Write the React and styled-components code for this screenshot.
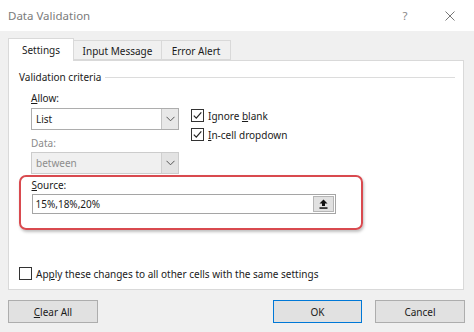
import React from "react";
import styled, { createGlobalStyle } from "styled-components";

const Global = createGlobalStyle`
  html, body { margin: 0; padding: 0; background: #f0f0f0; }
  * { box-sizing: border-box; }
`;

const Chevron = () => (
  <svg width="9" height="6" viewBox="0 0 9 6">
    <polyline points="0.5,0.8 4.5,4.8 8.5,0.8" fill="none" stroke="#555" strokeWidth="1" />
  </svg>
);

const Check = () => (
  <svg width="11" height="11" viewBox="0 0 11 11">
    <polyline points="1.8,5.6 4.3,8.2 9.3,2.4" fill="none" stroke="#222" strokeWidth="1.2" />
  </svg>
);

const UploadIcon = () => (
  <svg width="9" height="10" viewBox="0 0 9 10">
    <path d="M4.5 0.5 L8.5 4.5 H6 V7 H3 V4.5 H0.5 Z" fill="#111" />
    <rect x="0.5" y="8.3" width="8" height="1.5" fill="#111" />
  </svg>
);

const CloseIcon = () => (
  <svg width="10" height="10" viewBox="0 0 10 10">
    <path d="M0.5 0.5 L9.5 9.5 M9.5 0.5 L0.5 9.5" stroke="#777" strokeWidth="1" />
  </svg>
);

const Combo = ({ value, disabled }) => (
  <Select disabled={disabled}>
    <SelectValue disabled={disabled}>{value}</SelectValue>
    <SelectArrow disabled={disabled}>
      <Chevron />
    </SelectArrow>
  </Select>
);

const CheckRow = ({ checked, children }) => (
  <CheckLine>
    <Box>{checked && <Check />}</Box>
    <span>{children}</span>
  </CheckLine>
);

export default function App() {
  return (
    <Window>
      <Global />
      <TitleBar>
        <Title>Data Validation</Title>
        <TitleButtons>
          <Help>?</Help>
          <Close>
            <CloseIcon />
          </Close>
        </TitleButtons>
      </TitleBar>

      <Body>
        <Tabs>
          <Tab active w={66}>Settings</Tab>
          <Tab w={89}>Input Message</Tab>
          <Tab w={70}>Error Alert</Tab>
        </Tabs>

        <Panel>
          <Legend>
            <span>Validation criteria</span>
            <Rule />
          </Legend>

          <Criteria>
            <LeftCol>
              <Label>
                <u>A</u>llow:
              </Label>
              <Combo value="List" />
              <Label muted gap={6}>
                Data:
              </Label>
              <Combo value="between" disabled />
            </LeftCol>
            <RightCol>
              <CheckRow checked>
                Ignore <u>b</u>lank
              </CheckRow>
              <CheckRow checked>
                <u>I</u>n-cell dropdown
              </CheckRow>
            </RightCol>
          </Criteria>

          <SourceBox>
            <Label>
              <u>S</u>ource:
            </Label>
            <Input>
              <InputText>15%,18%,20%</InputText>
              <PickButton>
                <UploadIcon />
              </PickButton>
            </Input>
          </SourceBox>

          <ApplyRow>
            <CheckRow>
              Ap<u>p</u>ly these changes to all other cells with the same settings
            </CheckRow>
          </ApplyRow>
        </Panel>

        <Footer>
          <Button>
            <u>C</u>lear All
          </Button>
          <Spacer />
          <Button primary>OK</Button>
          <Button>Cancel</Button>
        </Footer>
      </Body>
    </Window>
  );
}

const Window = styled.div`
  width: 474px;
  height: 332px;
  display: flex;
  flex-direction: column;
  background: #f0f0f0;
  font-family: "Noto Sans", "Open Sans", sans-serif;
  font-size: 10px;
  color: #1b1b1b;
  overflow: hidden;
  u {
    text-decoration-thickness: 1px;
    text-underline-offset: 1px;
  }
`;

const TitleBar = styled.div`
  height: 31px;
  flex-shrink: 0;
  background: #fff;
  display: flex;
  align-items: center;
  padding-left: 8px;
`;

const Title = styled.div`
  font-size: 11.5px;
  color: #7b7b7b;
`;

const TitleButtons = styled.div`
  margin-left: auto;
  display: flex;
  align-items: center;
`;

const Help = styled.div`
  width: 46px;
  text-align: center;
  font-size: 11.5px;
  color: #888;
  margin-right: 0;
`;

const Close = styled.div`
  width: 46px;
  display: flex;
  justify-content: center;
  align-items: center;
  padding-right: 2px;
`;

const Body = styled.div`
  flex: 1;
  display: flex;
  flex-direction: column;
  padding: 7px 9px 0 8px;
`;

const Tabs = styled.div`
  display: flex;
  align-items: flex-end;
  height: 22px;
  position: relative;
  z-index: 1;
`;

const Tab = styled.div`
  width: ${(p) => p.w}px;
  height: ${(p) => (p.active ? 23 : 20)}px;
  margin-bottom: ${(p) => (p.active ? -1 : 0)}px;
  margin-left: ${(p) => (p.active ? 0 : -1)}px;
  border: 1px solid #d9d9d9;
  border-bottom: ${(p) => (p.active ? "none" : "1px solid #d9d9d9")};
  background: ${(p) => (p.active ? "#fff" : "#f0f0f0")};
  display: flex;
  align-items: center;
  justify-content: center;
  padding-top: ${(p) => (p.active ? 0 : 1)}px;
  &:first-child {
    margin-left: 0;
  }
`;

const Panel = styled.div`
  width: 456px;
  height: 230px;
  background: #fff;
  border: 1px solid #d9d9d9;
  display: flex;
  flex-direction: column;
  padding: 9px 8px 0 10px;
`;

const Legend = styled.div`
  display: flex;
  align-items: center;
  height: 14px;
  gap: 4px;
`;

const Rule = styled.div`
  flex: 1;
  height: 1px;
  background: #dcdcdc;
`;

const Criteria = styled.div`
  display: flex;
  gap: 12px;
  padding-left: 12px;
  margin-top: 7px;
`;

const LeftCol = styled.div`
  width: 148px;
  display: flex;
  flex-direction: column;
`;

const RightCol = styled.div`
  display: flex;
  flex-direction: column;
  gap: 6px;
  padding-top: 18px;
`;

const Label = styled.div`
  height: 14px;
  line-height: 14px;
  margin-top: ${(p) => p.gap || 0}px;
  margin-bottom: ${(p) => (p.muted ? 2 : 3)}px;
  color: ${(p) => (p.muted ? "#8a8a8a" : "#1b1b1b")};
`;

const Select = styled.div`
  height: 22px;
  display: flex;
  border: 1px solid ${(p) => (p.disabled ? "#cccccc" : "#adadad")};
  background: ${(p) => (p.disabled ? "#f0f0f0" : "#fff")};
`;

const SelectValue = styled.div`
  flex: 1;
  display: flex;
  align-items: center;
  padding-left: 4px;
  color: ${(p) => (p.disabled ? "#8d8d8d" : "#1b1b1b")};
`;

const SelectArrow = styled.div`
  width: 17px;
  display: flex;
  align-items: center;
  justify-content: center;
  background: ${(p) => (p.disabled ? "#e3e3e3" : "#e8e8e8")};
  border-left: 1px solid ${(p) => (p.disabled ? "#cfcfcf" : "#c4c4c4")};
`;

const CheckLine = styled.div`
  display: flex;
  align-items: center;
  gap: 4px;
  height: 13px;
  white-space: nowrap;
`;

const Box = styled.div`
  width: 13px;
  height: 13px;
  border: 1px solid #333;
  background: #fff;
  display: flex;
  align-items: center;
  justify-content: center;
  flex-shrink: 0;
`;

const SourceBox = styled.div`
  width: 344px;
  height: 55px;
  margin-top: 1px;
  border: 2.5px solid #d94a4f;
  border-radius: 7px;
  box-shadow: 1px 2px 3px rgba(0, 0, 0, 0.25);
  padding: 1px 0 0 10.5px;
`;

const Input = styled.div`
  width: 304px;
  height: 20px;
  margin-top: -1px;
  border: 1px solid #a5a5a5;
  display: flex;
  align-items: center;
  padding: 0 1px 0 3px;
`;

const InputText = styled.div`
  flex: 1;
`;

const PickButton = styled.div`
  width: 21px;
  height: 16px;
  background: #e1e1e1;
  border: 1px solid #b5b5b5;
  display: flex;
  align-items: center;
  justify-content: center;
`;

const ApplyRow = styled.div`
  margin-top: 37px;
  padding-left: 0;
`;

const Footer = styled.div`
  display: flex;
  gap: 13px;
  margin-top: 10px;
`;

const Spacer = styled.div`
  flex: 1;
`;

const Button = styled.div`
  width: ${(p) => (p.primary ? 89 : 90)}px;
  height: 23px;
  display: flex;
  align-items: center;
  justify-content: center;
  background: #e1e1e1;
  border: ${(p) => (p.primary ? "1.5px solid #0078d7" : "1px solid #adadad")};
`;
